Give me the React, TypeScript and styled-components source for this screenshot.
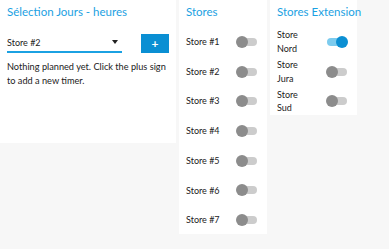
import styled, { createGlobalStyle } from 'styled-components';

const GlobalStyle = createGlobalStyle`
  body {
    margin: 0;
    background: #f7f7f7;
    font-family: Lato, "Noto Sans", sans-serif;
    color: #222;
  }
`;

const Page = styled.div`
  display: flex;
  align-items: flex-start;
  gap: 3px;
`;

const Card = styled.section<{ $width: number; $height: number }>`
  background: #fff;
  width: ${({ $width }) => $width}px;
  height: ${({ $height }) => $height}px;
  box-sizing: border-box;
  padding: 3px 7px 0;
`;

const Title = styled.h2`
  margin: 0 0 6px;
  font-size: 11.5px;
  line-height: 18px;
  font-weight: 400;
  color: #1ba1e2;
  white-space: nowrap;
`;

const PickerRow = styled.div`
  display: flex;
  align-items: flex-start;
  gap: 19px;
  margin-top: 12px;
`;

const Select = styled.div`
  width: 111px;
  height: 18px;
  display: flex;
  align-items: center;
  justify-content: space-between;
  border-bottom: 2px solid #1ba1e2;
  font-size: 9px;
  padding-right: 4px;
  box-sizing: content-box;
`;

const Caret = styled.span`
  width: 0;
  height: 0;
  border-left: 3px solid transparent;
  border-right: 3px solid transparent;
  border-top: 4px solid #222;
`;

const AddButton = styled.button`
  width: 28px;
  height: 19px;
  margin-top: 1px;
  border: none;
  background: #0a8fd3;
  color: #fff;
  font-weight: 700;
  font-size: 12px;
  line-height: 19px;
  padding: 0;
  font-family: inherit;
`;

const Hint = styled.p`
  margin: 7px 0 0;
  font-size: 9.2px;
  line-height: 14px;
  width: 159px;
`;

const Row = styled.div`
  display: flex;
  align-items: center;
  justify-content: space-between;
  height: 29.7px;
  font-size: 9px;
  line-height: 13.5px;
`;

const Label = styled.span`
  width: 30px;
`;

const Toggle = styled.span<{ $on?: boolean }>`
  position: relative;
  width: 22px;
  height: 12px;
  margin-right: 2px;

  &::before {
    content: '';
    position: absolute;
    left: 1px;
    top: 2px;
    width: 20px;
    height: 8px;
    border-radius: 4px;
    background: ${({ $on }) => ($on ? '#7ccbee' : '#cccccc')};
  }

  &::after {
    content: '';
    position: absolute;
    top: 0;
    left: ${({ $on }) => ($on ? '10px' : '0')};
    width: 12px;
    height: 12px;
    border-radius: 50%;
    background: ${({ $on }) => ($on ? '#0b8fd3' : '#8c8c8c')};
  }
`;

const stores = ['Store #1', 'Store #2', 'Store #3', 'Store #4', 'Store #5', 'Store #6', 'Store #7'];
const extensions = [
  { name: 'Store Nord', on: true },
  { name: 'Store Jura', on: false },
  { name: 'Store Sud', on: false },
];

export default function App() {
  return (
    <>
      <GlobalStyle />
      <Page>
        <Card $width={176} $height={143}>
          <Title>Sélection Jours - heures</Title>
          <PickerRow>
            <Select>
              Store #2
              <Caret />
            </Select>
            <AddButton>+</AddButton>
          </PickerRow>
          <Hint>Nothing planned yet. Click the plus sign to add a new timer.</Hint>
        </Card>
        <Card $width={88} $height={234}>
          <Title>Stores</Title>
          {stores.map((s) => (
            <Row key={s}>
              <span>{s}</span>
              <Toggle />
            </Row>
          ))}
        </Card>
        <Card $width={87} $height={115}>
          <Title>Stores Extension</Title>
          {extensions.map((e) => (
            <Row key={e.name}>
              <Label>{e.name}</Label>
              <Toggle $on={e.on} />
            </Row>
          ))}
        </Card>
      </Page>
    </>
  );
}
